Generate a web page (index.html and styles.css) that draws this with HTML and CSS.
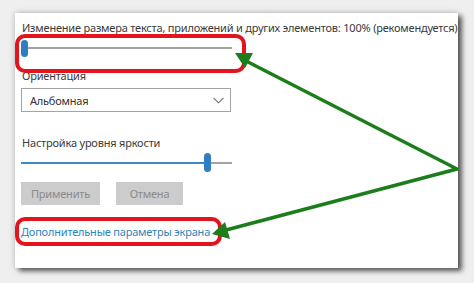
FILE: index.html
```html
<!DOCTYPE html>
<html lang="ru">
<head>
<meta charset="utf-8">
<link rel="stylesheet" href="styles.css">
</head>
<body>
<div class="panel">
  <div class="label l1">Изменение размера текста, приложений и других элементов: 100% (рекомендуется)</div>
  <div class="slider s1">
    <div class="track"><div class="fill" style="width:0px"></div></div>
    <div class="thumb" style="left:0px"></div>
  </div>
  <div class="label l2">Ориентация</div>
  <div class="select">
    <span>Альбомная</span>
    <svg class="chev" width="11" height="7" viewBox="0 0 11 7"><path d="M0.5 0.8 L5.5 5.8 L10.5 0.8" fill="none" stroke="#6a6a6a" stroke-width="1.1"/></svg>
  </div>
  <div class="label l3">Настройка уровня яркости</div>
  <div class="slider s2">
    <div class="track"><div class="fill" style="width:186px"></div></div>
    <div class="thumb" style="left:183px"></div>
  </div>
  <div class="buttons">
    <div class="btn b1">Применить</div>
    <div class="btn b2">Отмена</div>
  </div>
  <a class="link">Дополнительные параметры экрана</a>
</div>
<svg class="overlay" width="474" height="283" viewBox="0 0 474 283">
  <rect x="17" y="36" width="227" height="35" rx="8" fill="none" stroke="#e3141c" stroke-width="4"/>
  <rect x="17" y="219" width="203" height="25" rx="8" fill="none" stroke="#e3141c" stroke-width="4"/>
  <g stroke="#1b7e1b" stroke-width="3.5" stroke-linecap="round" stroke-linejoin="round" fill="none">
    <polyline points="248,62 457,169 226,230"/>
  </g>
  <g fill="#1b7e1b">
    <polygon points="235,53 253,53 245,68"/>
    <polygon points="212,234 225,222 230,239"/>
  </g>
</svg>
</body>
</html>
```
FILE: styles.css
```css
html, body {
  margin: 0;
  padding: 0;
}
body {
  width: 474px;
  height: 283px;
  background: #efefef;
  font-family: "Noto Sans", "Open Sans", sans-serif;
  position: relative;
  overflow: hidden;
}
.panel {
  position: absolute;
  left: 15px;
  top: 13px;
  width: 443px;
  height: 255px;
  box-sizing: border-box;
  background: #ffffff;
  box-shadow: 4px 3px 5px rgba(0,0,0,0.6), 0 0 6px rgba(0,0,0,0.22);
  padding: 7px 0 0 6px;
  display: flex;
  flex-direction: column;
  align-items: flex-start;
}
.label {
  font-size: 11px;
  letter-spacing: -0.2px;
  line-height: 16px;
  color: #3a3a3a;
  padding-left: 1px;
  white-space: nowrap;
}
.slider {
  position: relative;
  width: 211px;
  height: 18px;
}
.s1 { margin-top: 3px; }
.s2 { margin-top: 2px; height: 19px; }
.track {
  position: absolute;
  left: 0;
  right: 0;
  top: 8px;
  height: 2px;
  background: #a3a3a3;
}
.fill {
  height: 100%;
  background: #3b8ac4;
}
.thumb {
  position: absolute;
  top: 1px;
  width: 7px;
  height: 17px;
  border-radius: 4px;
  background: #2f7fc0;
}
.s2 .track { top: 9px; }
.s2 .thumb { top: 0; height: 19px; }
.l2 { margin-top: 11px; }
.select {
  margin-top: 4px;
  width: 210px;
  height: 24px;
  box-sizing: border-box;
  border: 1px solid #a3a3a3;
  display: flex;
  align-items: center;
  justify-content: space-between;
  padding: 0 6px 0 8px;
  font-size: 11px;
  letter-spacing: -0.2px;
  color: #333;
}
.l3 { margin-top: 23px; }
.buttons {
  margin-top: 10px;
  display: flex;
  gap: 16px;
}
.btn {
  height: 23px;
  background: #cccccc;
  color: #8a8a8a;
  font-size: 11px;
  letter-spacing: -0.2px;
  display: flex;
  align-items: center;
  justify-content: center;
}
.b1 { width: 79px; }
.b2 { width: 67px; }
.link {
  margin-top: 19px;
  font-size: 11px;
  letter-spacing: -0.2px;
  line-height: 16px;
  color: #3185b5;
  white-space: nowrap;
}
.overlay {
  position: absolute;
  left: 0;
  top: 0;
}
```
